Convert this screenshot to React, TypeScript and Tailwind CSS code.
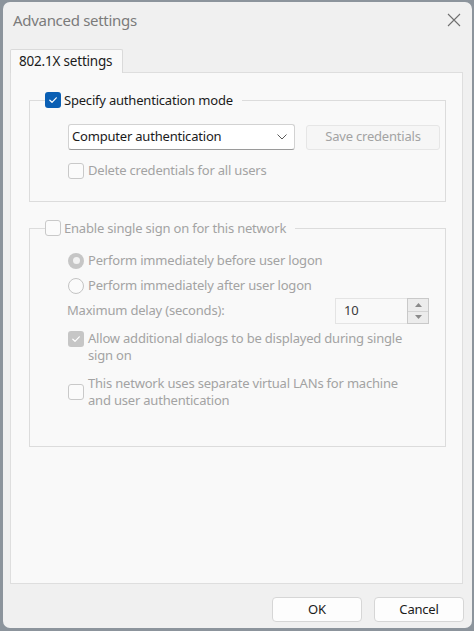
import React from 'react';

const font = { fontFamily: '"Noto Sans", "Open Sans", sans-serif' };

function Check({ checked, disabled }: { checked?: boolean; disabled?: boolean }) {
  if (checked) {
    return (
      <span
        className={`flex h-4 w-4 shrink-0 items-center justify-center rounded-[3px] ${
          disabled ? 'bg-[#c6c6c6]' : 'bg-[#0a5fb4]'
        }`}
      >
        <svg width="10" height="10" viewBox="0 0 10 10" fill="none">
          <path d="M1.8 5.2 L4 7.3 L8.3 2.8" stroke="white" strokeWidth="1.2" strokeLinecap="round" strokeLinejoin="round" />
        </svg>
      </span>
    );
  }
  return <span className="h-4 w-4 shrink-0 rounded-[3px] border border-[#c9c9c9] bg-[#fbfbfb]" />;
}

function Radio({ checked }: { checked?: boolean }) {
  if (checked) {
    return (
      <span className="flex h-4 w-4 shrink-0 items-center justify-center rounded-full bg-[#c6c6c6]">
        <span className="h-[7px] w-[7px] rounded-full bg-[#f2f2f2]" />
      </span>
    );
  }
  return <span className="h-4 w-4 shrink-0 rounded-full border border-[#c4c4c4] bg-[#fbfbfb]" />;
}

export default function App() {
  return (
    <div className="min-h-[631px] w-[474px] bg-[#8c949c] pb-[3px] pl-[3px] pr-[2px] pt-[2px] text-[13px] tracking-[-0.2px]" style={font}>
      <div className="flex h-[626px] flex-col rounded-[7px] bg-[#f0f0f0]">
        {/* title bar */}
        <div className="flex h-[47px] items-start justify-between pl-[10px] pr-[11px] pt-[8px]">
          <span className="text-[15px] leading-5 tracking-[-0.3px] text-[#7b7b7b]">Advanced settings</span>
          <svg width="14" height="14" viewBox="0 0 14 14" className="mt-[3px]">
            <path d="M1 1 L13 13 M13 1 L1 13" stroke="#6f6f6f" strokeWidth="1.1" />
          </svg>
        </div>

        {/* tab */}
        <div className="flex pl-[7px]">
          <div className="relative z-10 -mb-px flex h-[24px] w-[113px] items-center rounded-t-[2px] border border-b-0 border-[#dadada] bg-[#f9f9f9] pl-[8px] text-[13.5px] text-[#1b1b1b]">
            802.1X settings
          </div>
        </div>

        {/* panel */}
        <div className="ml-[7px] mr-[9px] flex h-[512px] flex-col gap-[18px] border border-[#dedede] bg-[#f9f9f9] pl-[18px] pr-[16px] pt-[19px]">
          <fieldset className="h-[110px] border border-[#dcdcdc] pl-[15px] pr-[5px]">
            <legend className="flex items-center gap-[3px] pr-[9px] text-[#1b1b1b]">
              <Check checked />
              <span className="leading-4">Specify authentication mode</span>
            </legend>
            <div className="pl-[23px] pt-[16px]">
              <div className="flex items-center gap-[11px]">
                <div className="flex h-[26px] w-[227px] items-center justify-between rounded-[3px] border border-[#d2d2d2] border-b-[#9a9a9a] bg-white pl-[3px] pr-[6px] text-[#1b1b1b]">
                  <span>Computer authentication</span>
                  <svg width="12" height="8" viewBox="0 0 12 8">
                    <path d="M1.5 1.5 L6 6 L10.5 1.5" stroke="#5a5a5a" strokeWidth="1" fill="none" />
                  </svg>
                </div>
                <div className="flex h-[25px] w-[134px] items-center justify-center rounded-[3px] border border-[#e6e6e6] bg-[#f6f6f6] text-[#a3a3a3]">
                  Save credentials
                </div>
              </div>
              <div className="mt-[11px] flex items-center gap-[4px] text-[#a3a3a3]">
                <Check />
                <span>Delete credentials for all users</span>
              </div>
            </div>
          </fieldset>

          <fieldset className="h-[227px] border border-[#dcdcdc] pl-[15px] pr-[16px]">
            <legend className="flex items-center gap-[3px] pr-[9px] text-[#a3a3a3]">
              <Check />
              <span className="leading-4">Enable single sign on for this network</span>
            </legend>
            <div className="flex flex-col pl-[23px] pt-[12px] text-[#a3a3a3]">
              <div className="flex h-[25px] items-center gap-[4px]">
                <Radio checked />
                <span>Perform immediately before user logon</span>
              </div>
              <div className="flex h-[25px] items-center gap-[4px]">
                <Radio />
                <span>Perform immediately after user logon</span>
              </div>
              <div className="flex h-[26px] items-center justify-between">
                <span className="-ml-px">Maximum delay (seconds):</span>
                <div className="flex h-[26px] items-stretch">
                  <div className="flex w-[74px] items-center border border-[#e4e4e4] bg-[#f9f9f9] pl-[8px] text-[#3a3a3a]">10</div>
                  <div className="-ml-[2px] flex w-[22px] flex-col border border-[#c9c9c9] bg-[#ececec]">
                    <div className="flex flex-1 items-center justify-center border-b border-[#d4d4d4]">
                      <svg width="7" height="4" viewBox="0 0 7 4"><path d="M0 4 L3.5 0 L7 4 Z" fill="#8a8a8a" /></svg>
                    </div>
                    <div className="flex flex-1 items-center justify-center">
                      <svg width="7" height="4" viewBox="0 0 7 4"><path d="M0 0 L3.5 4 L7 0 Z" fill="#8a8a8a" /></svg>
                    </div>
                  </div>
                </div>
              </div>
              <div className="mt-[6px] flex items-start gap-[4px] pr-[18px]">
                <span className="mt-px"><Check checked disabled /></span>
                <span className="leading-[17px]">Allow additional dialogs to be displayed during single sign on</span>
              </div>
              <div className="mt-[11px] flex items-center gap-[4px] pr-[18px]">
                <Check />
                <span className="leading-[17px]">This network uses separate virtual LANs for machine and user authentication</span>
              </div>
            </div>
          </fieldset>
        </div>

        {/* footer */}
        <div className="flex justify-end gap-[12px] pr-[8px] pt-[13px]">
          <button className="h-[25px] w-[90px] rounded-[4px] border border-[#d6d6d6] bg-[#fdfdfd] text-[#1b1b1b]">OK</button>
          <button className="h-[25px] w-[90px] rounded-[4px] border border-[#d6d6d6] bg-[#fdfdfd] text-[#1b1b1b]">Cancel</button>
        </div>
      </div>
    </div>
  );
}
